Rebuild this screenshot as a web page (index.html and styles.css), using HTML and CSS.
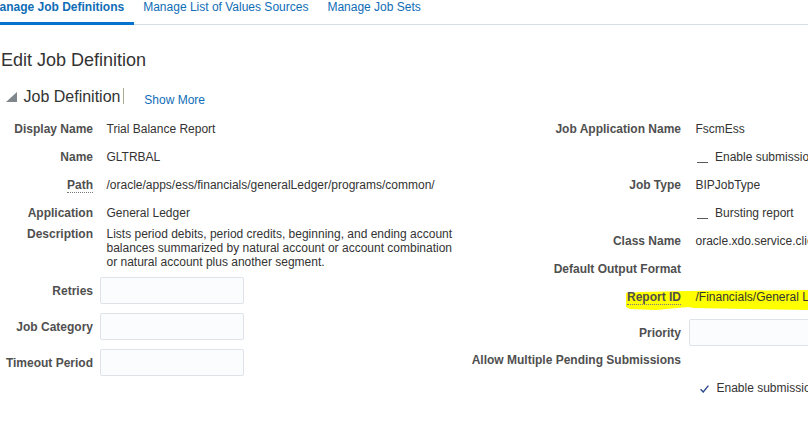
FILE: index.html
```html
<!DOCTYPE html>
<html lang="en">
<head>
<meta charset="utf-8">
<title>Edit Job Definition</title>
<link rel="stylesheet" href="styles.css">
</head>
<body>
<nav class="tabs">
  <a class="tab active">Manage Job Definitions</a>
  <a class="tab">Manage List of Values Sources</a>
  <a class="tab">Manage Job Sets</a>
</nav>

<h1 class="page-title">Edit Job Definition</h1>

<div class="section-head">
  <svg class="disclosure" width="11" height="10" viewBox="0 0 11 10"><path d="M11 0 L11 10 L0 10 Z" fill="#7f868c"/></svg>
  <h2 class="section-title">Job Definition</h2>
  <span class="caret"></span>
  <a class="show-more">Show More</a>
</div>

<div class="form">
  <div class="col col-left">
    <div class="row text"><div class="lbl">Display Name</div><div class="val">Trial Balance Report</div></div>
    <div class="row text"><div class="lbl">Name</div><div class="val">GLTRBAL</div></div>
    <div class="row text"><div class="lbl"><span class="help">Path</span></div><div class="val">/oracle/apps/ess/financials/generalLedger/programs/common/</div></div>
    <div class="row text"><div class="lbl">Application</div><div class="val">General Ledger</div></div>
    <div class="row desc"><div class="lbl">Description</div><div class="val wrap">Lists period debits, period credits, beginning, and ending account balances summarized by natural account or account combination or natural account plus another segment.</div></div>
    <div class="row input"><div class="lbl">Retries</div><div class="ctl"><input class="field" type="text"></div></div>
    <div class="row input"><div class="lbl">Job Category</div><div class="ctl"><input class="field" type="text"></div></div>
    <div class="row input"><div class="lbl">Timeout Period</div><div class="ctl"><input class="field" type="text"></div></div>
  </div>

  <div class="col col-right">
    <div class="row text"><div class="lbl">Job Application Name</div><div class="val">FscmEss</div></div>
    <div class="row text"><div class="lbl"></div><div class="val"><span class="box"></span>Enable submission from Enterprise Manager</div></div>
    <div class="row text"><div class="lbl">Job Type</div><div class="val">BIPJobType</div></div>
    <div class="row text"><div class="lbl"></div><div class="val"><span class="box"></span>Bursting report</div></div>
    <div class="row text"><div class="lbl">Class Name</div><div class="val">oracle.xdo.service.client.scheduler.BIPJobExecutor</div></div>
    <div class="row text"><div class="lbl">Default Output Format</div><div class="val"></div></div>
    <div class="row text marked">
      <svg class="marker" width="190" height="22" viewBox="0 0 190 22"><path d="M0 4 L14 3 L60 2 L182 1 L190 1 L190 21 L120 20 L68 19 L62 18 L30 21 L4 20 L0 18 Z" fill="#ffff00"/></svg>
      <div class="lbl"><span class="help">Report ID</span></div><div class="val">/Financials/General Ledger/Trial Balance Report.xdo</div>
    </div>
    <div class="row priority"><div class="lbl">Priority</div><div class="ctl"><input class="field" type="text"></div></div>
    <div class="row text"><div class="lbl">Allow Multiple Pending Submissions</div><div class="val"></div></div>
    <div class="row text"><div class="lbl"></div><div class="val"><svg class="check" width="9" height="8" viewBox="0 0 9 8"><path d="M0.6 4.2 L3.2 7 L8.4 0.6" fill="none" stroke="#2e4b8e" stroke-width="1.4"/></svg>Enable submission from Scheduled Processes</div></div>
  </div>
</div>
</body>
</html>
```

FILE: styles.css
```css
html, body {
  margin: 0;
  padding: 0;
  overflow: hidden;
  background: #ffffff;
}

body {
  font-family: "Liberation Sans", Arial, sans-serif;
  font-size: 12px;
  color: #333333;
  width: 808px;
  height: 424px;
}

.tabs {
  display: flex;
  margin-left: -20px;
  height: 24px;
  border-bottom: 1px solid #d6dde3;
}

.tab {
  display: block;
  padding: 0 9.5px;
  line-height: 15px;
  font-size: 12px;
  color: #0f6db6;
  white-space: nowrap;
}

.tab.active {
  font-weight: bold;
  height: 25px;
  box-sizing: border-box;
  border-bottom: 3px solid #0572ce;
}

.page-title {
  margin: 24px 0 0 1px;
  font-size: 18px;
  line-height: 22px;
  font-weight: normal;
  color: #333333;
}

.section-head {
  display: flex;
  align-items: flex-start;
  margin-top: 16px;
  height: 20px;
}

.disclosure {
  margin: 5px 0 0 6px;
  flex: none;
}

.section-title {
  margin: 0 0 0 6.5px;
  font-size: 16px;
  line-height: 20px;
  font-weight: normal;
  color: #333333;
}

.caret {
  width: 1px;
  height: 16px;
  margin: 1px 0 0 2.5px;
  background: #aaac96;
}

.show-more {
  margin: 5.8px 0 0 20.4px;
  font-size: 12px;
  line-height: 14px;
  color: #0f6db6;
}

.form {
  display: flex;
  margin-top: 8px;
}

.col-left {
  width: 466px;
  flex: none;
}

.col-right {
  flex: none;
}

.row {
  display: flex;
  line-height: 14px;
}

.row.text {
  padding: 7px 0;
}

.row.desc {
  padding: 0 0 4px;
}

.row.input {
  padding: 4px 0 5px;
  align-items: center;
}

.row.priority {
  padding: 8px 0 0;
  align-items: center;
}

.lbl {
  flex: none;
  text-align: right;
  font-weight: bold;
  color: #4f4f4f;
  white-space: nowrap;
}

.col-left .lbl {
  width: 93px;
}

.col-right .lbl {
  width: 215px;
}

.val {
  padding-left: 6.5px;
  white-space: nowrap;
  color: #333333;
}

.col-left .val,
.col-left .ctl {
  margin-left: 7px;
}

.col-right .val,
.col-right .ctl {
  margin-left: 8px;
}

.val.wrap {
  white-space: normal;
  width: 352px;
}

.ctl {
  display: flex;
}

.field {
  display: block;
  width: 144px;
  height: 27px;
  box-sizing: border-box;
  margin: 0;
  padding: 0 6px;
  border: 1px solid #dde3e8;
  border-radius: 2px;
  background: #fbfcfd;
  font: inherit;
}

.help {
  border-bottom: 1px dotted #7a7a7a;
}

.box {
  display: inline-block;
  width: 11px;
  height: 0;
  border-bottom: 1px solid #5a5a5a;
  vertical-align: -2px;
  margin: 0 7px 0 1.5px;
}

.check {
  display: inline-block;
  vertical-align: -1px;
  margin: 0 8px 0 4px;
}

.marked {
  position: relative;
}

.marker {
  position: absolute;
  left: 160px;
  top: 6px;
}

.marked .lbl,
.marked .val {
  position: relative;
}
```
